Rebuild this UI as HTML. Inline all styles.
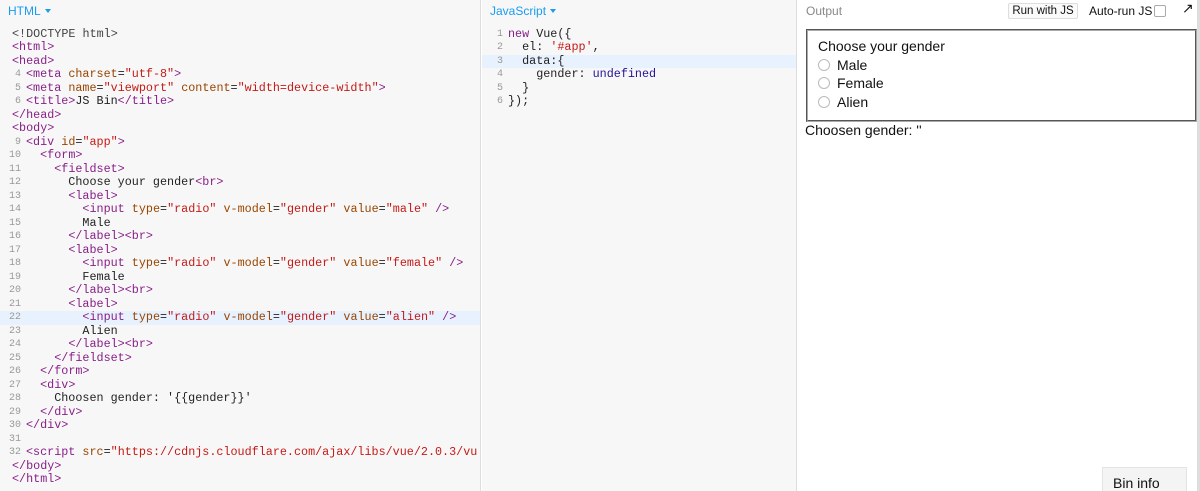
<!DOCTYPE html>
<html><head><meta charset="utf-8"><style>
*{margin:0;padding:0;box-sizing:border-box}
html,body{width:1200px;height:491px;overflow:hidden}
body{background:#fff;font-family:"Liberation Sans",sans-serif;position:relative}
.p{position:absolute;top:0;height:491px;overflow:hidden}
#h{left:0;width:481px;background:#f7f7f7;border-right:1px solid #ddd}
#j{left:482px;width:315px;background:#f7f7f7;border-right:1px solid #ddd}
#o{left:798px;width:402px;background:#fff}
.hd{position:absolute;top:4px;left:8px;font-size:12px;color:#1a9bf0}
.hd .c{display:inline-block;width:0;height:0;border-left:3.5px solid transparent;border-right:3.5px solid transparent;border-top:4px solid #1a9bf0;margin-left:4px;vertical-align:2px}
.code{position:absolute;top:27.5px;left:0;right:0;font-family:"Liberation Mono",monospace;font-size:11.75px;line-height:13.5px;color:#222}
.l{position:relative;height:13.5px;padding-left:26px;white-space:pre}
.l.x{padding-left:12px}
.l.hl{background:#e8f2ff}
.n{position:absolute;left:0;width:21px;text-align:right;font-size:10px;color:#999}
.t{color:#881f88}.a{color:#994500}.s{color:#c41a16}.k{color:#881f88}.u{color:#221199}
</style></head><body>
<div class="p" id="h"><div class="hd">HTML<span class="c"></span></div>
<div class="code">
<div class="l x"><span style="color:#444">&lt;!DOCTYPE html&gt;</span></div>
<div class="l x"><span class="t">&lt;html&gt;</span></div>
<div class="l x"><span class="t">&lt;head&gt;</span></div>
<div class="l"><span class="n">4</span><span class="t">&lt;meta</span> <span class="a">charset</span>=<span class="s">"utf-8"</span><span class="t">&gt;</span></div>
<div class="l"><span class="n">5</span><span class="t">&lt;meta</span> <span class="a">name</span>=<span class="s">"viewport"</span> <span class="a">content</span>=<span class="s">"width=device-width"</span><span class="t">&gt;</span></div>
<div class="l"><span class="n">6</span><span class="t">&lt;title&gt;</span>JS Bin<span class="t">&lt;/title&gt;</span></div>
<div class="l x"><span class="t">&lt;/head&gt;</span></div>
<div class="l x"><span class="t">&lt;body&gt;</span></div>
<div class="l"><span class="n">9</span><span class="t">&lt;div</span> <span class="a">id</span>=<span class="s">"app"</span><span class="t">&gt;</span></div>
<div class="l"><span class="n">10</span>  <span class="t">&lt;form&gt;</span></div>
<div class="l"><span class="n">11</span>    <span class="t">&lt;fieldset&gt;</span></div>
<div class="l"><span class="n">12</span>      Choose your gender<span class="t">&lt;br&gt;</span></div>
<div class="l"><span class="n">13</span>      <span class="t">&lt;label&gt;</span></div>
<div class="l"><span class="n">14</span>        <span class="t">&lt;input</span> <span class="a">type</span>=<span class="s">"radio"</span> <span class="a">v-model</span>=<span class="s">"gender"</span> <span class="a">value</span>=<span class="s">"male"</span> <span class="t">/&gt;</span></div>
<div class="l"><span class="n">15</span>        Male</div>
<div class="l"><span class="n">16</span>      <span class="t">&lt;/label&gt;&lt;br&gt;</span></div>
<div class="l"><span class="n">17</span>      <span class="t">&lt;label&gt;</span></div>
<div class="l"><span class="n">18</span>        <span class="t">&lt;input</span> <span class="a">type</span>=<span class="s">"radio"</span> <span class="a">v-model</span>=<span class="s">"gender"</span> <span class="a">value</span>=<span class="s">"female"</span> <span class="t">/&gt;</span></div>
<div class="l"><span class="n">19</span>        Female</div>
<div class="l"><span class="n">20</span>      <span class="t">&lt;/label&gt;&lt;br&gt;</span></div>
<div class="l"><span class="n">21</span>      <span class="t">&lt;label&gt;</span></div>
<div class="l hl"><span class="n">22</span>        <span class="t">&lt;input</span> <span class="a">type</span>=<span class="s">"radio"</span> <span class="a">v-model</span>=<span class="s">"gender"</span> <span class="a">value</span>=<span class="s">"alien"</span> <span class="t">/&gt;</span></div>
<div class="l"><span class="n">23</span>        Alien</div>
<div class="l"><span class="n">24</span>      <span class="t">&lt;/label&gt;&lt;br&gt;</span></div>
<div class="l"><span class="n">25</span>    <span class="t">&lt;/fieldset&gt;</span></div>
<div class="l"><span class="n">26</span>  <span class="t">&lt;/form&gt;</span></div>
<div class="l"><span class="n">27</span>  <span class="t">&lt;div&gt;</span></div>
<div class="l"><span class="n">28</span>    Choosen gender: '{{gender}}'</div>
<div class="l"><span class="n">29</span>  <span class="t">&lt;/div&gt;</span></div>
<div class="l"><span class="n">30</span><span class="t">&lt;/div&gt;</span></div>
<div class="l"><span class="n">31</span></div>
<div class="l"><span class="n">32</span><span class="t">&lt;script</span> <span class="a">src</span>=<span class="s">"https://cdnjs.cloudflare.com/ajax/libs/vue/2.0.3/vu</span></div>
<div class="l x"><span class="t">&lt;/body&gt;</span></div>
<div class="l x"><span class="t">&lt;/html&gt;</span></div>
</div></div>
<div class="p" id="j"><div class="hd">JavaScript<span class="c"></span></div>
<div class="code">
<div class="l"><span class="n">1</span><span class="k">new</span> Vue({</div>
<div class="l"><span class="n">2</span>  el: <span class="s">'#app'</span>,</div>
<div class="l hl"><span class="n">3</span>  data:{</div>
<div class="l"><span class="n">4</span>    gender: <span class="u">undefined</span></div>
<div class="l"><span class="n">5</span>  }</div>
<div class="l"><span class="n">6</span>});</div>
</div></div>
<div class="p" id="o">
<div style="position:absolute;top:4px;left:8px;font-size:12px;color:#888">Output</div>
<div style="position:absolute;top:3px;left:210px;width:70px;height:16px;border:1px solid #ddd;border-radius:2px;background:#fafafa;font-size:11.5px;line-height:14px;text-align:center;color:#111">Run with JS</div>
<div style="position:absolute;top:4px;left:291px;font-size:12px;color:#111">Auto-run JS</div>
<div style="position:absolute;top:5px;left:356px;width:12px;height:12px;border:1px solid #aaa;border-radius:2px;background:#fff"></div>
<div style="position:absolute;top:0px;left:384px;font-size:14px;color:#111">&#8599;</div>
<div style="position:absolute;top:29px;left:8px;width:391px;height:93px;border:2px groove #aaa"></div>
<div style="position:absolute;top:37px;left:20px;font-size:14px;line-height:18.7px;color:#111">Choose your gender<br>
<span style="display:inline-block;width:12px;height:12px;border:1px solid #bbb;border-radius:50%;vertical-align:-1px;margin-right:7px"></span>Male<br>
<span style="display:inline-block;width:12px;height:12px;border:1px solid #bbb;border-radius:50%;vertical-align:-1px;margin-right:7px"></span>Female<br>
<span style="display:inline-block;width:12px;height:12px;border:1px solid #bbb;border-radius:50%;vertical-align:-1px;margin-right:7px"></span>Alien</div>
<div style="position:absolute;top:122px;left:7px;font-size:14px;color:#111">Choosen gender: ''</div>
<div style="position:absolute;top:467px;left:304px;width:85px;height:30px;border:1px solid #e4e4e4;background:#f4f4f4;font-size:14px;padding:7px 0 0 10px;color:#111">Bin info</div>
<div style="position:absolute;top:0;right:0;width:3px;height:491px;background:#ddd"></div>
</div>
</body></html>
